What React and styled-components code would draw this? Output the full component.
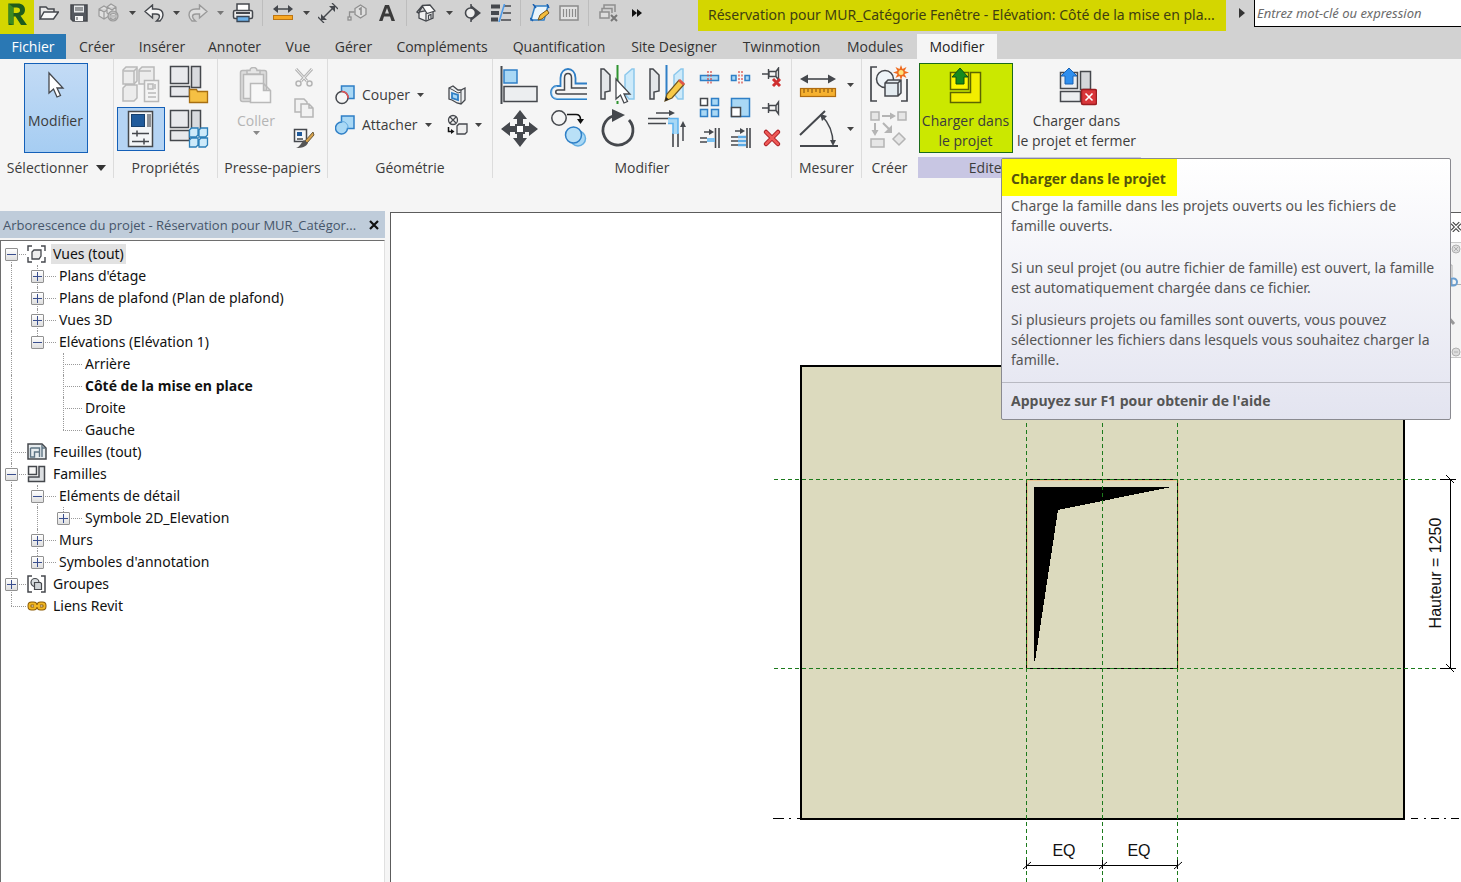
import { useState } from "react";
import styled, { createGlobalStyle, css } from "styled-components";

const GlobalStyle = createGlobalStyle`
  * {
    box-sizing: border-box;
  }
  body {
    margin: 0;
    font-family: "Open Sans", "Noto Sans", sans-serif;
    font-size: 14px;
    line-height: 20px;
    color: #3c3c3c;
    overflow: hidden;
  }
  button {
    border: 0;
    padding: 0;
    background: none;
    font: inherit;
    color: inherit;
  }
  svg {
    display: block;
    flex: none;
  }
`;

const wideText = css`
  font-family: "Noto Sans", "Open Sans", sans-serif;
`;

const Shell = styled.div`
  display: flex;
  flex-direction: column;
  height: 100vh;
  background: #f5f5f5;
`;

/* ---------- title bar ---------- */

const TitleBar = styled.header`
  display: flex;
  align-items: flex-start;
  height: 34px;
  background: #d2d2d2;
`;

const AppButton = styled.button`
  display: flex;
  justify-content: center;
  width: 34px;
  height: 34px;
  background: #d4d600;
`;

const QuickButton = styled.button`
  display: flex;
  align-items: center;
  justify-content: center;
  flex: none;
  width: ${({ $w }) => $w || 30}px;
  height: 26px;
`;

const QuickSeparator = styled.span`
  flex: none;
  width: 1px;
  height: 26px;
  margin: 0 5px 0 4px;
  background: #bdbdbd;
`;

const DocumentTitle = styled.div`
  flex: 0 1 528px;
  min-width: 0;
  height: 31px;
  margin-left: 48px;
  padding: 5px 4px 0 10px;
  background: #d4d600;
  color: #3f3f10;
  white-space: nowrap;
  overflow: hidden;
  ${wideText}
`;

const SearchToggle = styled(QuickButton)`
  margin-left: 4px;
`;

const SearchBox = styled.input`
  flex: 1;
  min-width: 0;
  height: 27px;
  border: 1px solid #000;
  border-width: 0 0 1px 1px;
  padding: 0 2px;
  font: italic 13px "Noto Sans", sans-serif;
  background: #fff;

  &::placeholder {
    color: #6b6b6b;
    opacity: 1;
  }
`;

/* ---------- tabs ---------- */

const TabBar = styled.nav`
  display: flex;
  height: 25px;
  background: #d2d2d2;
`;

const Tab = styled.button`
  flex: none;
  width: ${({ $w }) => $w}px;
  height: 25px;
  white-space: nowrap;
  color: #333;
  ${({ $kind }) =>
    $kind === "file" &&
    css`
      background: #2a78b4;
      color: #fff;
    `}
  ${({ $kind }) =>
    $kind === "active" &&
    css`
      background: #f5f5f5;
      color: #222;
    `}
`;

/* ---------- ribbon ---------- */

const Ribbon = styled.section`
  display: flex;
  flex: none;
  height: 152px;
  background: #f5f5f5;
`;

const Group = styled.div`
  position: relative;
  display: flex;
  flex-direction: column;
  flex: none;
  width: ${({ $w }) => $w}px;
  height: 119px;
  border-right: 1px solid ${({ $last }) => ($last ? "transparent" : "#dcdcdc")};
`;

const GroupBody = styled.div`
  display: flex;
  justify-content: center;
  gap: ${({ $gap }) => $gap || 0}px;
  height: 98px;
  padding: 4px 2px 0 0;
`;

const GroupLabel = styled.div`
  display: flex;
  align-items: center;
  justify-content: center;
  gap: 8px;
  height: 21px;
  white-space: nowrap;
  background: ${({ $accent }) => ($accent ? "#c8c6e3" : "transparent")};
`;

const BigButton = styled.button`
  display: flex;
  flex-direction: column;
  align-items: center;
  flex: none;
  width: ${({ $w }) => $w}px;
  height: 90px;
  padding-top: 3px;
  border: 1px solid transparent;
  white-space: nowrap;

  ${({ $selected }) =>
    $selected &&
    css`
      border-color: #1460b8;
      background: linear-gradient(#c3dbf5, #a6cdf2);
    `}
  ${({ $hover }) =>
    $hover &&
    css`
      border-color: #1a6b1a;
      background: #cbe800;
    `}
  &:disabled {
    color: #b4b4b4;
  }
`;

const BigIcon = styled.span`
  display: flex;
  align-items: flex-start;
  justify-content: center;
  height: 44px;
`;

const ToolGrid = styled.div`
  display: grid;
  grid-template-columns: repeat(${({ $cols }) => $cols}, ${({ $cell }) => $cell}px);
  grid-auto-rows: ${({ $row }) => $row}px;
  align-content: start;
`;

const ToolButton = styled.button`
  display: flex;
  align-items: center;
  justify-content: center;
  border: 1px solid ${({ $selected }) => ($selected ? "#1460b8" : "transparent")};
  background: ${({ $selected }) => ($selected ? "#b5d4f4" : "transparent")};
`;

const GeometryRows = styled.div`
  display: flex;
  flex-direction: column;
  width: 100%;
  padding: 17px 2px 0 7px;
`;

const GeometryRow = styled.div`
  display: flex;
  align-items: center;
  height: 30px;
`;

const TextTool = styled.button`
  display: flex;
  align-items: center;
  gap: 7px;
  width: 111px;
`;

const Column = styled.div`
  display: flex;
  flex-direction: column;
`;

const MeasureRow = styled.div`
  display: flex;
  align-items: center;
  gap: 8px;
  height: 44px;
`;

/* ---------- tooltip ---------- */

const Tooltip = styled.aside`
  position: absolute;
  z-index: 5;
  top: 99px;
  left: 83px;
  width: 450px;
  border: 1px solid #8a8a90;
  border-radius: 2px;
  background: linear-gradient(#ffffff, #e3e4f0);
  color: #555;
`;

const TooltipTitle = styled.h2`
  width: 175px;
  height: 37px;
  margin: 0;
  padding: 10px 0 0 9px;
  background: #ffff00;
  color: #54540c;
  font-size: 14px;
  line-height: 20px;
  white-space: nowrap;
`;

const TooltipText = styled.p`
  margin: 0 0 ${({ $after }) => $after}px;
  padding: 0 0 0 9px;
  white-space: nowrap;
  ${wideText}
`;

const TooltipFooter = styled.div`
  height: 37px;
  padding: 8px 9px;
  border-top: 1px solid #b8b9c2;
  font-weight: 700;
`;

/* ---------- workspace ---------- */

const Workspace = styled.main`
  display: flex;
  flex: 1;
  min-height: 0;
`;

const Browser = styled.aside`
  display: flex;
  flex-direction: column;
  flex: none;
  width: 385px;
`;

const BrowserHeader = styled.div`
  display: flex;
  align-items: center;
  justify-content: space-between;
  height: 27px;
  margin-bottom: 2px;
  padding: 0 5px 0 3px;
  background: #bfccda;
  color: #46566a;
  font-size: 13px;
  white-space: nowrap;
`;

const Tree = styled.ul`
  flex: 1;
  margin: 0;
  padding: 2px 0 0 4px;
  list-style: none;
  border: 1px solid #6e6e6e;
  border-width: 1px 0 0 1px;
  border-right: 1px solid #e0e0e0;
  background: #fff;
  color: #111;
`;

const TreeRow = styled.li`
  display: flex;
  align-items: center;
  height: 22px;
`;

const Guide = styled.span`
  position: relative;
  flex: none;
  width: ${({ $short }) => ($short ? 22 : 26)}px;
  height: 22px;

  &::before {
    content: "";
    position: absolute;
    left: 6px;
    top: ${({ $shape }) => ($shape === "F" ? 11 : 0)}px;
    bottom: ${({ $shape }) => ($shape === "L" ? 11 : 0)}px;
    border-left: ${({ $shape }) => ($shape === " " ? 0 : 1)}px dotted #9a9a9a;
  }

  &::after {
    content: "";
    position: absolute;
    left: 6px;
    right: 1px;
    top: 11px;
    border-top: ${({ $shape }) => ("FTL".includes($shape) ? 1 : 0)}px dotted #9a9a9a;
  }
`;

const Expander = styled.button`
  position: absolute;
  z-index: 1;
  left: 0;
  top: 5px;
  width: 13px;
  height: 13px;
  border: 1px solid #919191;
  border-radius: 1px;
  background: linear-gradient(#fff, #dedede);
`;

const TreeIcon = styled.span`
  display: flex;
  width: 24px;
`;

const TreeLabel = styled.span`
  padding: 0 2px;
  white-space: nowrap;
  background: ${({ $selected }) => ($selected ? "#e2e2e2" : "transparent")};
  ${({ $bold }) =>
    $bold
      ? css`
          font-weight: 700;
        `
      : wideText}
`;

const CloseButton = styled.button`
  display: flex;
`;

const Canvas = styled.section`
  position: relative;
  flex: 1;
  min-width: 0;
  margin: 1px 0 0 5px;
  border: 1px solid #5c5c5c;
  border-width: 1px 0 0 1px;
  background: #fff;
`;

const NavigationBar = styled.div`
  position: absolute;
  top: 29px;
  right: -22px;
  display: flex;
  flex-direction: column;
  width: 44px;
  height: 116px;
  border: 1px solid #c9c9c9;
  background: #f4f4f4;
`;

const CanvasFrame = styled.div`
  position: relative;
  height: 100%;
  overflow: hidden;
`;

const WindowClose = styled.button`
  position: absolute;
  top: 8px;
  right: 0;
`;

/* ---------- drawing helpers ---------- */

const INK = "#45484d";
const BLUE = "#2f7fc6";
const SKY = "#a9d8f5";

const Svg = ({ w, h = w, children }) => (
  <svg width={w} height={h} viewBox={`0 0 ${w} ${h}`} fill="none" stroke={INK} strokeWidth="1.5" aria-hidden="true">
    {children}
  </svg>
);

const Caret = ({ color = "#444" }) => (
  <Svg w={7} h={4}>
    <path d="M0 0h7L3.5 4z" fill={color} stroke="none" />
  </Svg>
);

const Folder = () => (
  <path d="M20.500 27.500v-3h7l1 2h10v11h-18z" fill="#f5c043" stroke="#a86f12" strokeWidth="1.300" />
);

const Pencil = () => (
  <>
    <path d="M18 36l2-7L32 15l5 4.500L25 33z" fill="#f7c948" stroke="#6d5320" strokeWidth="1.200" />
    <path d="M31 16l2-2 5 4.500-2 2z" fill="#e0574a" stroke="none" />
    <path d="M18 36l1-4 3 2.500z" fill="#222" stroke="none" />
  </>
);

const Pointer = ({ x, y }) => (
  <path
    transform={`translate(${x} ${y})`}
    d="M0 0v20l4.500-4 3.500 8 3.500-1.500L8 15h6z"
    fill="#fff"
    stroke={INK}
    strokeWidth="1.300"
  />
);

const icons = {
  logo: (
    <Svg w={24} h={28}>
      <path
        d="M3.500 25V3.500h9c5 0 7.500 2.500 7.500 6.500 0 3-1.800 5-4.500 5.800L22 25h-6l-5.500-8.500H8.500V25zM8.500 7.500v5.500h3.200c2.200 0 3.300-1 3.300-2.800 0-1.700-1.100-2.700-3.300-2.700z"
        fill="#1f5c1c"
        fillRule="evenodd"
        stroke="none"
      />
      <path d="M3.500 3.500l5 4V25l-5-2z" fill="#3c8a20" stroke="none" />
    </Svg>
  ),
  open: (
    <Svg w={20} h={18}>
      <path d="M1 14.500V3h6l2 2h6v3" fill="#e8e8e8" />
      <path d="M1 15l4-7h14.500l-5 7z" fill="#f8f8f8" />
    </Svg>
  ),
  save: (
    <Svg w={18}>
      <path d="M1 1h16v16H3l-2-2z" fill="#54585f" />
      <path d="M4 1.500h10v7H4z" fill="#e6e8ea" stroke="none" />
      <path d="M5 12h8v5H5z" fill="#f6f6f6" stroke="none" />
      <path d="M7 13v3M5 4h8M5 6h8" strokeWidth="1" />
    </Svg>
  ),
  package: (
    <Svg w={22} h={20}>
      <g stroke="#9a9a9a" strokeWidth="1.200" fill="#dfdfdf">
        <path d="M1 6l5-3 5 3v7l-5 3-5-3zM1 6l5 3 5-3M6 9v7" />
        <path d="M9 4l4-3 5 3v6l-4 3-5-3zM9 4l5 3 4-3M14 7v6" />
        <circle cx="15" cy="13" r="5" fill="#bdbdbd" />
        <path d="M12 12c2-2 5-2 6.500 0M12 15c2 2 5 1.500 6-.5" />
      </g>
    </Svg>
  ),
  undo: (
    <Svg w={20} h={18}>
      <path
        d="M1 7.500L8.500 1v4h3.500c4.500 0 7 2.500 7 6 0 2.500-1.500 4.500-3 6h-3.500c1.800-1.500 3-3 3-4.500 0-1.700-1.200-2.500-3.500-2.500H8.500v4z"
        fill="#f4f4f4"
        strokeWidth="1.400"
      />
    </Svg>
  ),
  redo: (
    <Svg w={20} h={18}>
      <path
        d="M19 7.500L11.500 1v4H8c-4.500 0-7 2.500-7 6 0 2.500 1.500 4.500 3 6h3.500c-1.800-1.500-3-3-3-4.500C4.500 10.800 5.700 10 8 10h3.500v4z"
        stroke="#9a9a9a"
        strokeWidth="1.400"
        fill="#dedede"
      />
    </Svg>
  ),
  print: (
    <Svg w={22} h={20}>
      <path d="M5 8V1h12v7" fill="#fff" />
      <rect x="1.500" y="7.500" width="19" height="8" rx="1.500" fill="#eee" />
      <path d="M4 10h14" strokeWidth="2" />
      <path d="M5 13.500h12v5H5z" fill="#6db1e8" stroke="#3a4654" strokeWidth="1.300" />
    </Svg>
  ),
  measureSmall: (
    <Svg w={20} h={16}>
      <path d="M2 4h16" />
      <path d="M0 4l5-4v8zM20 4l-5-4v8z" fill={INK} stroke="none" />
      <rect x=".5" y="10.500" width="19" height="4" fill="#f7a722" stroke="#bd7511" strokeWidth="1" />
    </Svg>
  ),
  dimension: (
    <Svg w={20}>
      <path d="M5 15L15 5" />
      <path d="M3 17V11l6 6zM17 3v6l-6-6z" fill={INK} stroke="none" />
      <path d="M0 14l6 6M14 0l6 6" strokeWidth="1.300" />
    </Svg>
  ),
  tag: (
    <Svg w={20} h={18}>
      <g stroke="#8f8f8f" strokeWidth="1.300">
        <path d="M2.500 13V8h5" />
        <rect x="1" y="13" width="3" height="3" fill="#ddd" />
        <path d="M8 4.500L13.500 1 19 4.500v6L13.500 14 8 10.500z" fill="#dedede" />
        <path d="M12 5.500L14 4v7" strokeWidth="1.600" />
      </g>
    </Svg>
  ),
  text: (
    <Svg w={18}>
      <path d="M1 17L7 1h4l6 16h-3.500L12 12.500H6L4.500 17zM7 9.500h4L9 4z" fill="#3b3b3b" fillRule="evenodd" stroke="none" />
    </Svg>
  ),
  home: (
    <Svg w={20} h={18}>
      <path d="M3 8v6l7 3 7-3V7l-3-3-5 3z" fill="#f0f0f0" strokeWidth="1.300" />
      <path d="M1 8l5.500-6.500L14 1l5 6-8 2.500-4.500-7L2.500 9z" fill="#fafafa" strokeWidth="1.300" />
      <path d="M10 9v8M12.500 15.500v-4l2.500-1v4" strokeWidth="1.200" />
    </Svg>
  ),
  section: (
    <Svg w={18}>
      <path d="M8 1l10 8-10 8z" fill={INK} stroke="none" />
      <circle cx="7.500" cy="9" r="5" fill="#eee" strokeWidth="1.600" />
      <path d="M8 0v4M8 14v4" />
    </Svg>
  ),
  thinLines: (
    <Svg w={20} h={18}>
      <path d="M0 2.500h9M0 9h8M0 15.500h7" strokeWidth="4" />
      <path d="M13 2h7M12 9h8M10 16h10" strokeWidth="1.500" />
      <path d="M13.500 0L8 18" stroke="#4f9be8" strokeWidth="1.600" />
    </Svg>
  ),
  edit: (
    <Svg w={20} h={18}>
      <path d="M5 2h13l-4 14H1z" fill="#eaf5fc" stroke={BLUE} />
      <path d="M3 0l3 4M17 0l2 4M0 14l3 3" stroke="#1c5fae" />
      <path d="M8 16l2-5 7-5 2 3-7 6z" fill="#f5bd3b" stroke="#77551a" strokeWidth="1" />
    </Svg>
  ),
  list: (
    <Svg w={20} h={16}>
      <rect x="1" y="1" width="18" height="14" stroke="#8b8b8b" fill="#e2e2e2" />
      <path d="M4.500 4v8M7.500 4v8M10.500 4v8M13.500 4v8M16.500 4v8" stroke="#8b8b8b" strokeWidth="1.200" />
    </Svg>
  ),
  closeHidden: (
    <Svg w={20} h={18}>
      <g stroke="#8f8f8f">
        <path d="M5 5V1h11v7M3 8V4.500h10V9" />
        <rect x="1" y="8" width="9" height="6" fill="#ddd" />
        <path d="M12 11l6 6M18 11l-6 6" stroke="#777" strokeWidth="2" />
      </g>
    </Svg>
  ),
  more: (
    <Svg w={10} h={8}>
      <path d="M0 0l5 4-5 4zM5 0l5 4-5 4z" fill="#111" stroke="none" />
    </Svg>
  ),
  play: (
    <Svg w={6} h={10}>
      <path d="M0 0l6 5-6 5z" fill="#333" stroke="none" />
    </Svg>
  ),
  arrow: (
    <Svg w={24} h={32}>
      <Pointer x={5} y={6} />
    </Svg>
  ),
  typeProps: (
    <Svg w={40}>
      <g stroke="#b9b9b9" fill="#ececec">
        <path d="M2 5l3-3h11v14l-3 3H2zM18 5l3-3h12v14l-3 3H18zM2 23l3-3h11v13l-3 3H2z" />
        <path d="M2 6h11V19M18 6h12M13 6l3-3" />
        <rect x="23.500" y="15.500" width="14" height="21" fill="#f4f4f4" />
        <path d="M27 19h5v5h-5zM34 19v5M27 28h8M27 32h8" />
      </g>
    </Svg>
  ),
  familyTypes: (
    <Svg w={40}>
      <path d="M1.500 1.500h18v17h-18zM1.500 21.500h19v10h-19z" fill="#e8e9ec" />
      <path d="M22.500 1.500h9v21h-9z" fill="#d8dade" />
      <Folder />
    </Svg>
  ),
  properties: (
    <Svg w={28} h={38}>
      <rect x="1.500" y="1.500" width="24" height="35" fill="#f4f6f8" />
      <rect x="4.500" y="4.500" width="13" height="12" fill="#1f5a9b" stroke="#163f6c" strokeWidth="1" />
      <path d="M20 4h4v13h-4z" fill="#8e9196" stroke="none" />
      <path d="M5 23.500h17M5 31.500h17M10 20.500v6M17 28.500v6" />
    </Svg>
  ),
  typeList: (
    <Svg w={40}>
      <path d="M1.500 1.500h18v17h-18zM1.500 21.500h19v10h-19z" fill="#e8e9ec" />
      <path d="M22.500 1.500h9v21h-9z" fill="#d8dade" />
      <g fill="#cdeafa" stroke="#2c7fb8" strokeWidth="1.300">
        <path d="M20.500 21l2-2h6.500v7l-2 2h-6.500zM30 21l2-2h6.500v7l-2 2H30zM20.500 31l2-2h6.500v7l-2 2h-6.500zM30 31l2-2h6.500v7l-2 2H30z" />
      </g>
    </Svg>
  ),
  paste: (
    <Svg w={34} h={38}>
      <g stroke="#b9b9b9">
        <rect x="1.500" y="3.500" width="26" height="31" rx="2" fill="#dcdcdc" />
        <path d="M4.500 7.500h20v24h-20z" fill="#f0f0f0" />
        <path d="M8 7V3.500h3c0-4 7-4 7 0h3V7z" fill="#e6e6e6" />
        <path d="M11.500 16.500h13l7 7v12h-20zM24.500 16.500v7h7" fill="#f8f8f8" />
      </g>
    </Svg>
  ),
  cut: (
    <Svg w={20}>
      <g stroke="#b5b5b5">
        <path d="M2 1l11 12M18 1L7 13" strokeWidth="3" />
        <path d="M2 1l11 12M18 1L7 13" stroke="#f2f2f2" strokeWidth="1" />
        <circle cx="4.500" cy="15.500" r="2.500" />
        <circle cx="15.500" cy="15.500" r="2.500" />
      </g>
    </Svg>
  ),
  copy: (
    <Svg w={20}>
      <g stroke="#b5b5b5" fill="#f2f2f2">
        <path d="M1 1h9l3 3v10H1z" />
        <path d="M7 6h8l4 4v9H7zM15 6v4h4" />
      </g>
    </Svg>
  ),
  match: (
    <Svg w={22}>
      <path d="M1.500 2.500h12v12h-12z" fill="#f4f6f8" />
      <path d="M4 5h5v4H4z" fill="#1f5a9b" stroke="none" />
      <path d="M4 12h6" />
      <path d="M20 5l-8 9 2 2 7-8z" fill="#d8a24a" stroke="#6b5a3a" strokeWidth="1" />
      <path d="M11 13l4 3c-2 4-6 5-12 5 4-1 5-5 8-8z" fill="#555" stroke="none" />
    </Svg>
  ),
  cutGeometry: (
    <Svg w={20}>
      <path d="M6.500 1H19v12.500H6.500z" fill={SKY} stroke={BLUE} />
      <circle cx="7" cy="12.500" r="6" fill="#f5f5f5" />
      <path d="M6.500 6.500a6 6 0 016.500 7" stroke="#e2555a" />
    </Svg>
  ),
  joinGeometry: (
    <Svg w={20}>
      <path d="M6.500 1H19v12.500h-6.500a6 6 0 11-6-6.500z" fill={SKY} stroke={BLUE} />
      <path d="M6.500 6.500a6 6 0 016.500 7" stroke="#62a9de" strokeWidth="1" />
    </Svg>
  ),
  cope: (
    <Svg w={20}>
      <path d="M2 3l4-2 5 4h3l4-2v12l-4 4-4-1-5-3-3-1z" fill="#eef0f2" strokeWidth="1.300" />
      <path d="M14 5v14M2 3l4 2 5 3 3-1" strokeWidth="1" />
      <path d="M5 8l6 2v5l-6-2z" fill={SKY} stroke={BLUE} strokeWidth="1.800" />
    </Svg>
  ),
  demolish: (
    <Svg w={22}>
      <circle cx="6" cy="6" r="4.500" strokeWidth="1.300" />
      <path d="M3 3l6 6M9 3L3 9" strokeWidth="1.200" />
      <path d="M10 12l2-2h8v8l-2 2h-8z" fill="#eee" strokeWidth="1.300" />
      <path d="M1.500 13v4.500h3" strokeWidth="1.500" stroke="#111" />
      <path d="M4 15l3.500 2.500L4 20z" fill="#111" stroke="none" />
    </Svg>
  ),
  align: (
    <Svg w={40}>
      <path d="M1.500 1v38" strokeWidth="2" />
      <rect x="4" y="5" width="13" height="13" fill={SKY} stroke={BLUE} />
      <rect x="4" y="21.500" width="33" height="15" fill="#eceef0" />
    </Svg>
  ),
  offset: (
    <Svg w={40}>
      <path d="M38 34H8c-8 0-8-13 0-13h3.500V13c0-12 15-12 15 0v5.500H38" stroke={BLUE} strokeWidth="1.800" />
      <path d="M38 29H9c-3 0-3-4 0-4h6.500V13c0-6 7-6 7 0v10H38" />
      <path d="M38 33.500H8c-7 0-7-12 0-12" stroke="#8ec8ef" strokeWidth=".8" />
    </Svg>
  ),
  mirrorPick: (
    <Svg w={40}>
      <path d="M3 4h3l6 6v16l-5 1v7H3z" fill="#e4e6e9" />
      <path d="M36 4h-2l-7 6v19l4 5h5z" fill="#cdeafa" stroke="#8cc8ec" />
      <path d="M19.500 0v33M19.500 36v3" stroke="#2f9430" strokeWidth="2" />
      <Pointer x={18} y={14} />
    </Svg>
  ),
  mirrorDraw: (
    <Svg w={40}>
      <path d="M3 4h3l6 6v16l-5 1v7H3z" fill="#e4e6e9" />
      <path d="M36 4h-2l-7 6v19l4 5h5z" fill="#cdeafa" stroke="#8cc8ec" />
      <path d="M19.500 0v34" stroke={BLUE} strokeWidth="2" />
      <Pencil />
    </Svg>
  ),
  move: (
    <Svg w={40}>
      <path
        d="M20 1l7 9h-4v6h-6v-6h-4zM20 38l7-9h-4v-6h-6v6h-4zM1 20l9-7v4h6v6h-6v4zM38 20l-9-7v4h-6v6h6v4z"
        fill={INK}
        stroke="none"
      />
      <rect x="16" y="16" width="8" height="8" fill="#fff" strokeWidth="2" />
    </Svg>
  ),
  copyMove: (
    <Svg w={40}>
      <circle cx="10" cy="9" r="7.200" fill="#f4f4f4" />
      <path d="M18 5.500h9c3 0 4.500 1 4.500 5" stroke="#111" strokeWidth="1.600" />
      <path d="M28 10h7l-3.500 5z" fill="#111" stroke="none" />
      <circle cx="29" cy="29.500" r="7.500" fill={SKY} stroke="#63ade0" />
      <circle cx="24.500" cy="26" r="8" fill="#b9e0f7" stroke={BLUE} />
    </Svg>
  ),
  rotate: (
    <Svg w={40}>
      <path d="M31 11a15 15 0 11-16-4" strokeWidth="2.800" />
      <path d="M14 0l13 6-13 7z" fill={INK} stroke="none" />
    </Svg>
  ),
  trimCorner: (
    <Svg w={42} h={40}>
      <path d="M2 9.500h22M2 14.500h18M27 24v14M32 24v14" strokeWidth="1.600" />
      <path d="M22 12h7.500v13" stroke="#a9d8f5" strokeWidth="5" />
      <path d="M22 9.500h10V25M22 14.500h5V25" stroke="#5fb2ee" strokeWidth="1.500" />
      <path d="M10 4h16M37 32V16" />
      <path d="M23 1l6 3-6 3zM34 18l3-6 3 6z" fill={INK} stroke="none" />
    </Svg>
  ),
  split: (
    <Svg w={22}>
      <rect x="1.500" y="8.500" width="18" height="5" fill={SKY} stroke={BLUE} />
      <path d="M9 4v14M12 4v14" stroke="#d8433c" strokeWidth="1.200" strokeDasharray="2 1.500" />
    </Svg>
  ),
  splitGap: (
    <Svg w={22}>
      <path d="M1.500 8.500H6v5H1.500zM15 8.500h4.500v5H15z" fill={SKY} stroke={BLUE} />
      <path d="M9 4v14M12 4v14" stroke="#d8433c" strokeWidth="1.200" strokeDasharray="2 1.500" />
    </Svg>
  ),
  unpin: (
    <Svg w={22}>
      <path d="M1 7h6M7.500 2v10M8 4.500h7v5H8zM15 4.500L17.500 1v12L15 9.500" strokeWidth="1.400" />
      <path d="M12 12l7 7M19 12l-7 7" stroke="#cf2f2f" strokeWidth="3" />
    </Svg>
  ),
  array: (
    <Svg w={22}>
      <rect x="1.500" y="1.500" width="7" height="7" fill="#fff" />
      <path d="M12.500 1.500h7v7h-7zM1.500 12.500h7v7h-7zM12.500 12.500h7v7h-7z" fill={SKY} stroke={BLUE} />
    </Svg>
  ),
  scale: (
    <Svg w={22}>
      <rect x="1.500" y="1.500" width="18" height="18" fill={SKY} stroke={BLUE} />
      <rect x="1.500" y="10.500" width="9" height="9" fill="#fff" />
    </Svg>
  ),
  pin: (
    <Svg w={22}>
      <path d="M1 11h6M7.500 6v10M8 8.500h7v5H8zM15 8.500L17.500 5v12L15 13.500" strokeWidth="1.400" />
    </Svg>
  ),
  extend: (
    <Svg w={22}>
      <path d="M1 11h7M1 15h7M16.500 1v20M20 1v20" strokeWidth="1.600" />
      <path d="M8 13h8" stroke="#7cc2f2" strokeWidth="4" />
      <path d="M5 5h6" />
      <path d="M10 2l5 3-5 3z" fill={INK} stroke="none" />
    </Svg>
  ),
  extendMany: (
    <Svg w={22}>
      <path d="M1 10h8M1 14h8M1 18h8M17 1v20M20 1v20" strokeWidth="1.600" />
      <path d="M8 10h8M8 14h8M8 18h8" stroke="#5cabe6" strokeWidth="2.500" />
      <path d="M5 4h6" />
      <path d="M10 1l5 3-5 3z" fill={INK} stroke="none" />
    </Svg>
  ),
  remove: (
    <Svg w={20}>
      <path d="M4 4l12 12M16 4L4 16" stroke="#a81d22" strokeWidth="4.500" strokeLinecap="round" />
      <path d="M4 4l12 12M16 4L4 16" stroke="#ee5a57" strokeWidth="2.500" strokeLinecap="round" />
    </Svg>
  ),
  measure: (
    <Svg w={40}>
      <path d="M6 14h28" strokeWidth="1.600" />
      <path d="M2 14l8-4.500v9zM38 14l-8-4.500v9z" fill={INK} stroke="none" />
      <rect x="2.500" y="23.500" width="35" height="8" fill="#f6b12f" stroke="#b06c10" strokeWidth="1.200" />
      <path d="M6 24v4M10 24v3M14 24v4M18 24v3M22 24v4M26 24v3M30 24v4M34 24v3" stroke="#7d4d0c" strokeWidth="1" />
    </Svg>
  ),
  angle: (
    <Svg w={40}>
      <path d="M2 26L27 2M2 37h38" strokeWidth="2" />
      <path d="M24 7c8 8 11 17 11 28" />
      <path d="M22 5l7 2-5 5zM32 31h6l-3 6z" fill={INK} stroke="none" />
    </Svg>
  ),
  createGroup: (
    <Svg w={40}>
      <path d="M8 2H2v34h6M32 36h6V14" strokeWidth="1.700" />
      <circle cx="16" cy="14" r="8.500" fill="#eef4f8" />
      <path d="M16 18l3-3h13v13l-3 3H16zM16 18h13v13M29 18l3-3" fill="#e3ebf0" />
      <path
        d="M32 0l1.500 4 4-2-2 4 4.500 1.500-4.500 1.500 2 4-4-2L32 15l-1.500-4-4 2 2-4L24 7.500 28.500 6l-2-4 4 2z"
        fill="#ee6b1f"
        stroke="none"
      />
      <circle cx="32" cy="7.500" r="2.500" fill="#ffe27a" stroke="none" />
    </Svg>
  ),
  assembly: (
    <Svg w={40}>
      <g stroke="#b4b4b4" fill="#e6e6e6">
        <path d="M2 3h8v8H2zM29 3h8v8h-8zM2 30h13v8H2zM30 24l6 6-6 6-6-6z" />
        <path d="M13 7h10M6 14v9M14 14l7 7" strokeWidth="2" />
        <path d="M21 3.500L27 7l-6 3.500zM2.500 21h7L6 27zM23 16v8h-8z" fill="#b4b4b4" stroke="none" />
      </g>
    </Svg>
  ),
  load: (
    <Svg w={40}>
      <path d="M4.500 5.500h18v17h-18z" fill="#fff600" stroke="#5c6400" />
      <path d="M4.500 25.500h20v-20h10v30h-30z" fill="#f3ee00" stroke="#5c6400" />
      <path d="M14 1l8 9h-4v7h-8v-7H6z" fill="#168a1e" stroke="#0b5412" strokeWidth="1" />
    </Svg>
  ),
  loadClose: (
    <Svg w={40}>
      <path d="M3.500 5.500h17v16h-17zM3.500 24.500h20v10h-20z" fill="#eceef0" />
      <path d="M23.500 4.500h10v18h-10z" fill="#d4d6da" />
      <path d="M12 1l8 8h-4v8H8V9H4z" fill="#2f8fee" stroke="#1a63b5" strokeWidth="1" />
      <rect x="24.500" y="22.500" width="15" height="15" rx="1.500" fill="#d9363a" stroke="#9c1c20" />
      <path d="M28.500 26.500l7 7M35.500 26.500l-7 7" stroke="#fff" strokeWidth="1.600" />
    </Svg>
  ),
  views: (
    <Svg w={19} h={18}>
      <path d="M5 1H1v5M14 1h4v5M1 12v5h4M18 12v5h-4" strokeWidth="1.400" />
      <path d="M5 7l2-2h7v6l-2 3H5z" fill="#eee" strokeWidth="1.300" />
    </Svg>
  ),
  sheets: (
    <Svg w={20} h={18}>
      <path d="M1 1h14l4 4v11H1z" fill="#e7ecef" />
      <path d="M3.500 5h9v9M3.500 5v9h4V9h5M15 2v12M15 5h3" strokeWidth="1.400" stroke="#5e7484" />
    </Svg>
  ),
  families: (
    <Svg w={19} h={18}>
      <path d="M1.500 1.500h8v8h-8z" fill="#f6f6f6" />
      <path d="M1.500 12h10.500V1.500h5.500v15h-16z" fill="#dcdfe2" />
    </Svg>
  ),
  groups: (
    <Svg w={19} h={18}>
      <path d="M5 1H1v16h4M14 1h4v16h-4" />
      <circle cx="8" cy="7.500" r="4" fill="#d8dde0" strokeWidth="1.200" />
      <path d="M7.500 7.500h6l1 1v6h-7z" fill="#cfd4d8" strokeWidth="1.200" />
    </Svg>
  ),
  links: (
    <Svg w={20} h={10}>
      <g stroke="#8c5c08" strokeWidth="4">
        <rect x="2.500" y="2.500" width="6" height="5" rx="2" />
        <rect x="11.500" y="2.500" width="6" height="5" rx="2" />
      </g>
      <g stroke="#f2b824" strokeWidth="2">
        <rect x="2.500" y="2.500" width="6" height="5" rx="2" />
        <rect x="11.500" y="2.500" width="6" height="5" rx="2" />
        <path d="M7 5h6" />
      </g>
    </Svg>
  ),
  close: (
    <Svg w={12}>
      <path d="M2 2l8 8M10 2l-8 8" stroke="#111" strokeWidth="2.200" />
    </Svg>
  ),
};

/* ---------- data ---------- */

const quickTools = [
  { icon: "open", label: "Ouvrir" },
  { icon: "save", label: "Enregistrer" },
  { icon: "package", label: "Synchroniser", disabled: true },
  { caret: true },
  { icon: "undo", label: "Annuler", w: 28 },
  { caret: true },
  { icon: "redo", label: "Rétablir", w: 28 },
  { caret: true, color: "#777" },
  { icon: "print", label: "Imprimer" },
  { separator: true },
  { icon: "measureSmall", label: "Mesurer" },
  { caret: true },
  { icon: "dimension", label: "Cote alignée", w: 28 },
  { icon: "tag", label: "Etiquette" },
  { icon: "text", label: "Texte" },
  { separator: true },
  { icon: "home", label: "Vue 3D", w: 28 },
  { caret: true, w: 18 },
  { icon: "section", label: "Coupe", w: 28 },
  { icon: "thinLines", label: "Lignes fines" },
  { separator: true },
  { icon: "edit", label: "Modifier le profil", w: 28 },
  { icon: "list", label: "Nomenclature" },
  { separator: true },
  { icon: "closeHidden", label: "Fermer les vues cachées" },
  { icon: "more", label: "Personnaliser", w: 26 },
];

const tabs = [
  { label: "Fichier", w: 66, kind: "file" },
  { label: "Créer", w: 62 },
  { label: "Insérer", w: 68 },
  { label: "Annoter", w: 77 },
  { label: "Vue", w: 50 },
  { label: "Gérer", w: 61 },
  { label: "Compléments", w: 116 },
  { label: "Quantification", w: 118 },
  { label: "Site Designer", w: 112 },
  { label: "Twinmotion", w: 103 },
  { label: "Modules", w: 84 },
  { label: "Modifier", w: 80, kind: "active" },
];

const modifyTools = ["align", "offset", "mirrorPick", "mirrorDraw", "move", "copyMove", "rotate", "trimCorner"];
const modifySmallTools = ["split", "splitGap", "unpin", "array", "scale", "pin", "extend", "extendMany", "remove"];

// guides: F = first, T = branch, L = last branch, | = pass through
const tree = [
  { guides: "F", box: "-", icon: "views", label: "Vues (tout)", selected: true },
  { guides: "|T", box: "+", label: "Plans d'étage" },
  { guides: "|T", box: "+", label: "Plans de plafond (Plan de plafond)" },
  { guides: "|T", box: "+", label: "Vues 3D" },
  { guides: "|L", box: "-", label: "Elévations (Elévation 1)" },
  { guides: "| T", label: "Arrière" },
  { guides: "| T", label: "Côté de la mise en place", bold: true },
  { guides: "| T", label: "Droite" },
  { guides: "| L", label: "Gauche" },
  { guides: "T", icon: "sheets", label: "Feuilles (tout)" },
  { guides: "T", box: "-", icon: "families", label: "Familles" },
  { guides: "|T", box: "-", label: "Eléments de détail" },
  { guides: "||L", box: "+", label: "Symbole 2D_Elevation" },
  { guides: "|T", box: "+", label: "Murs" },
  { guides: "|L", box: "+", label: "Symboles d'annotation" },
  { guides: "T", box: "+", icon: "groups", label: "Groupes" },
  { guides: "L", icon: "links", label: "Liens Revit" },
];

/* ---------- parts ---------- */

function QuickTools() {
  return quickTools.map((tool, index) => {
    if (tool.separator) return <QuickSeparator key={index} />;
    if (tool.caret)
      return (
        <QuickButton key={index} $w={tool.w || 16} aria-label="Options">
          <Caret color={tool.color} />
        </QuickButton>
      );
    return (
      <QuickButton key={index} $w={tool.w} disabled={tool.disabled} aria-label={tool.label}>
        {icons[tool.icon]}
      </QuickButton>
    );
  });
}

function TreeItem({ guides, box, icon, label, bold, selected }) {
  const last = guides.length - 1;
  return (
    <TreeRow>
      {guides.split("").map((shape, index) => (
        <Guide key={index} $shape={shape} $short={index === last && last === 0}>
          {index === last && box && (
            <Expander aria-label={box === "+" ? "Développer" : "Réduire"}>
              <svg width="11" height="11" stroke="#3a4f8f" aria-hidden="true">
                <path d={box === "+" ? "M1 5.500h9M5.500 1v9" : "M1 5.500h9"} />
              </svg>
            </Expander>
          )}
        </Guide>
      ))}
      {icon && <TreeIcon>{icons[icon]}</TreeIcon>}
      <TreeLabel $bold={bold} $selected={selected}>
        {label}
      </TreeLabel>
    </TreeRow>
  );
}

function Elevation() {
  const dash = { stroke: "#1c7a1c", strokeWidth: 1, strokeDasharray: "4 3" };
  return (
    <svg
      width="100%"
      height="100%"
      viewBox="391 213 1070 669"
      preserveAspectRatio="xMinYMin meet"
      shapeRendering="crispEdges"
      fill="none"
      fontFamily="Liberation Sans, sans-serif"
      fontSize="16"
    >
      <rect x="801" y="366" width="603" height="453" fill="#dcdabe" stroke="#000" strokeWidth="2" />
      <path d="M1027.500 480.500h151v189M1027.500 480v188h150" stroke="#ecc490" />
      <path d="M1026.500 479v190M1177.500 479v190M1026 479.500h152M1026 668.500h152" stroke="#000" />
      <path d="M1034 487h137l-113 23-23 151h-1z" fill="#000" />
      <g {...dash}>
        <path d="M774 479.500h662M774 668.500h662" />
        <path d="M1026.500 360v522M1102.500 360v522M1177.500 360v522" />
      </g>
      <g stroke="#000">
        <path d="M773 818.500h11M789 818.500h2M797 818.500h3M1411 818.500h7M1424 818.500h2M1431 818.500h8M1444 818.500h2M1451 818.500h8" />
        <path d="M1026 865.500h152M1026.500 860v9M1102.500 860v9M1177.500 860v9" />
        <path d="M1440 479.500h16M1440 668.500h16M1450.500 479v190" />
        <path d="M1023 869l8-7M1099 869l8-7M1174 869l8-7M1446 475l8 8M1446 664l8 8" shapeRendering="auto" />
      </g>
      <g fill="#111">
        <text x="1064" y="856" textAnchor="middle">
          EQ
        </text>
        <text x="1139" y="856" textAnchor="middle">
          EQ
        </text>
        <text transform="translate(1441 573) rotate(-90)" textAnchor="middle">
          Hauteur = 1250
        </text>
      </g>
    </svg>
  );
}

function LoadTooltip() {
  return (
    <Tooltip role="tooltip">
      <TooltipTitle>Charger dans le projet</TooltipTitle>
      <TooltipText $after={22}>
        Charge la famille dans les projets ouverts ou les fichiers de
        <br />
        famille ouverts.
      </TooltipText>
      <TooltipText $after={12}>
        Si un seul projet (ou autre fichier de famille) est ouvert, la famille
        <br />
        est automatiquement chargée dans ce fichier.
      </TooltipText>
      <TooltipText $after={12}>
        Si plusieurs projets ou familles sont ouverts, vous pouvez
        <br />
        sélectionner les fichiers dans lesquels vous souhaitez charger la
        <br />
        famille.
      </TooltipText>
      <TooltipFooter>Appuyez sur F1 pour obtenir de l'aide</TooltipFooter>
    </Tooltip>
  );
}

export default function App() {
  const [query, setQuery] = useState("");

  return (
    <>
      <GlobalStyle />
      <Shell>
        <TitleBar>
          <AppButton aria-label="Menu de l'application">{icons.logo}</AppButton>
          <QuickTools />
          <DocumentTitle>
            Réservation pour MUR_Catégorie Fenêtre - Elévation: Côté de la mise en pla...
          </DocumentTitle>
          <SearchToggle $w={24} aria-label="Rechercher">
            {icons.play}
          </SearchToggle>
          <SearchBox
            aria-label="Recherche"
            placeholder="Entrez mot-clé ou expression"
            value={query}
            onChange={(e) => setQuery(e.target.value)}
          />
        </TitleBar>

        <TabBar>
          {tabs.map((tab) => (
            <Tab key={tab.label} $w={tab.w} $kind={tab.kind}>
              {tab.label}
            </Tab>
          ))}
        </TabBar>

        <Ribbon>
          <Group $w={114}>
            <GroupBody>
              <BigButton $w={64} $selected>
                <BigIcon>{icons.arrow}</BigIcon>
                Modifier
              </BigButton>
            </GroupBody>
            <GroupLabel>
              Sélectionner
              <Svg w={10} h={6}>
                <path d="M0 0h10L5 6z" fill="#333" stroke="none" />
              </Svg>
            </GroupLabel>
          </Group>

          <Group $w={104}>
            <GroupBody>
              <ToolGrid $cols={2} $cell={48} $row={44}>
                <ToolButton aria-label="Propriétés du type" disabled>
                  {icons.typeProps}
                </ToolButton>
                <ToolButton aria-label="Catégorie de famille">{icons.familyTypes}</ToolButton>
                <ToolButton aria-label="Propriétés" $selected>
                  {icons.properties}
                </ToolButton>
                <ToolButton aria-label="Types de familles">{icons.typeList}</ToolButton>
              </ToolGrid>
            </GroupBody>
            <GroupLabel>Propriétés</GroupLabel>
          </Group>

          <Group $w={110}>
            <GroupBody $gap={9}>
              <BigButton $w={56} disabled>
                <BigIcon>{icons.paste}</BigIcon>
                Coller
                <Caret color="#888" />
              </BigButton>
              <ToolGrid $cols={1} $cell={22} $row={30}>
                <ToolButton aria-label="Couper">{icons.cut}</ToolButton>
                <ToolButton aria-label="Copier">{icons.copy}</ToolButton>
                <ToolButton aria-label="Copier les propriétés">{icons.match}</ToolButton>
              </ToolGrid>
            </GroupBody>
            <GroupLabel>Presse-papiers</GroupLabel>
          </Group>

          <Group $w={165}>
            <GroupBody>
              <GeometryRows>
                <GeometryRow>
                  <TextTool>
                    {icons.cutGeometry}
                    Couper
                    <Caret />
                  </TextTool>
                  <ToolButton aria-label="Grugeage">{icons.cope}</ToolButton>
                </GeometryRow>
                <GeometryRow>
                  <TextTool>
                    {icons.joinGeometry}
                    Attacher
                    <Caret />
                  </TextTool>
                  <ToolButton aria-label="Démolir">{icons.demolish}</ToolButton>
                  <QuickButton $w={16} aria-label="Options">
                    <Caret />
                  </QuickButton>
                </GeometryRow>
              </GeometryRows>
            </GroupBody>
            <GroupLabel>Géométrie</GroupLabel>
          </Group>

          <Group $w={299}>
            <GroupBody $gap={3}>
              <ToolGrid $cols={4} $cell={49} $row={44}>
                {modifyTools.map((name) => (
                  <ToolButton key={name} aria-label={name}>
                    {icons[name]}
                  </ToolButton>
                ))}
              </ToolGrid>
              <ToolGrid $cols={3} $cell={31} $row={30}>
                {modifySmallTools.map((name) => (
                  <ToolButton key={name} aria-label={name}>
                    {icons[name]}
                  </ToolButton>
                ))}
              </ToolGrid>
            </GroupBody>
            <GroupLabel>Modifier</GroupLabel>
          </Group>

          <Group $w={70}>
            <GroupBody>
              <Column>
                <MeasureRow>
                  <ToolButton aria-label="Mesurer">{icons.measure}</ToolButton>
                  <Caret />
                </MeasureRow>
                <MeasureRow>
                  <ToolButton aria-label="Cote angulaire">{icons.angle}</ToolButton>
                  <Caret />
                </MeasureRow>
              </Column>
            </GroupBody>
            <GroupLabel>Mesurer</GroupLabel>
          </Group>

          <Group $w={56} $last>
            <GroupBody>
              <ToolGrid $cols={1} $cell={44} $row={44}>
                <ToolButton aria-label="Créer un groupe">{icons.createGroup}</ToolButton>
                <ToolButton aria-label="Créer un assemblage">{icons.assembly}</ToolButton>
              </ToolGrid>
            </GroupBody>
            <GroupLabel>Créer</GroupLabel>
          </Group>

          <Group $w={224} $last>
            <GroupBody $gap={2}>
              <BigButton $w={94} $hover>
                <BigIcon>{icons.load}</BigIcon>
                Charger dans
                <br />
                le projet
              </BigButton>
              <BigButton $w={124}>
                <BigIcon>{icons.loadClose}</BigIcon>
                Charger dans
                <br />
                le projet et fermer
              </BigButton>
            </GroupBody>
            <GroupLabel $accent>Editeur de familles</GroupLabel>
            <LoadTooltip />
          </Group>
        </Ribbon>

        <Workspace>
          <Browser>
            <BrowserHeader>
              Arborescence du projet - Réservation pour MUR_Catégor...
              <CloseButton aria-label="Fermer">{icons.close}</CloseButton>
            </BrowserHeader>
            <Tree>
              {tree.map((item) => (
                <TreeItem key={item.label} {...item} />
              ))}
            </Tree>
          </Browser>
          <Canvas>
            <CanvasFrame>
              <Elevation />
              <WindowClose aria-label="Fermer la vue">
                <Svg w={10} h={11}>
                  <path d="M1 2l8 8M9 2l-8 8" stroke="#444" strokeWidth="3.500" />
                  <path d="M1 2l8 8M9 2l-8 8" stroke="#fff" strokeWidth="1.200" />
                </Svg>
              </WindowClose>
              <NavigationBar>
                <svg width="42" height="114" viewBox="0 0 42 114" fill="none" stroke="#b0b0b0" aria-hidden="true">
                  <circle cx="16" cy="6" r="4" fill="#ddd" />
                  <path d="M14 4l4 4M18 4l-4 4M0 41.500h42" />
                  <path d="M5 22h7v12" />
                  <path d="M11.500 35.500h2a3 3 0 010 7h-2z" stroke="#6b9fd0" strokeWidth="2" />
                  <path d="M8 74l6 7" stroke="#999" strokeWidth="3" />
                  <circle cx="16" cy="109" r="4" fill="#ddd" />
                  <path d="M14 109h4" />
                </svg>
              </NavigationBar>
            </CanvasFrame>
          </Canvas>
        </Workspace>
      </Shell>
    </>
  );
}
